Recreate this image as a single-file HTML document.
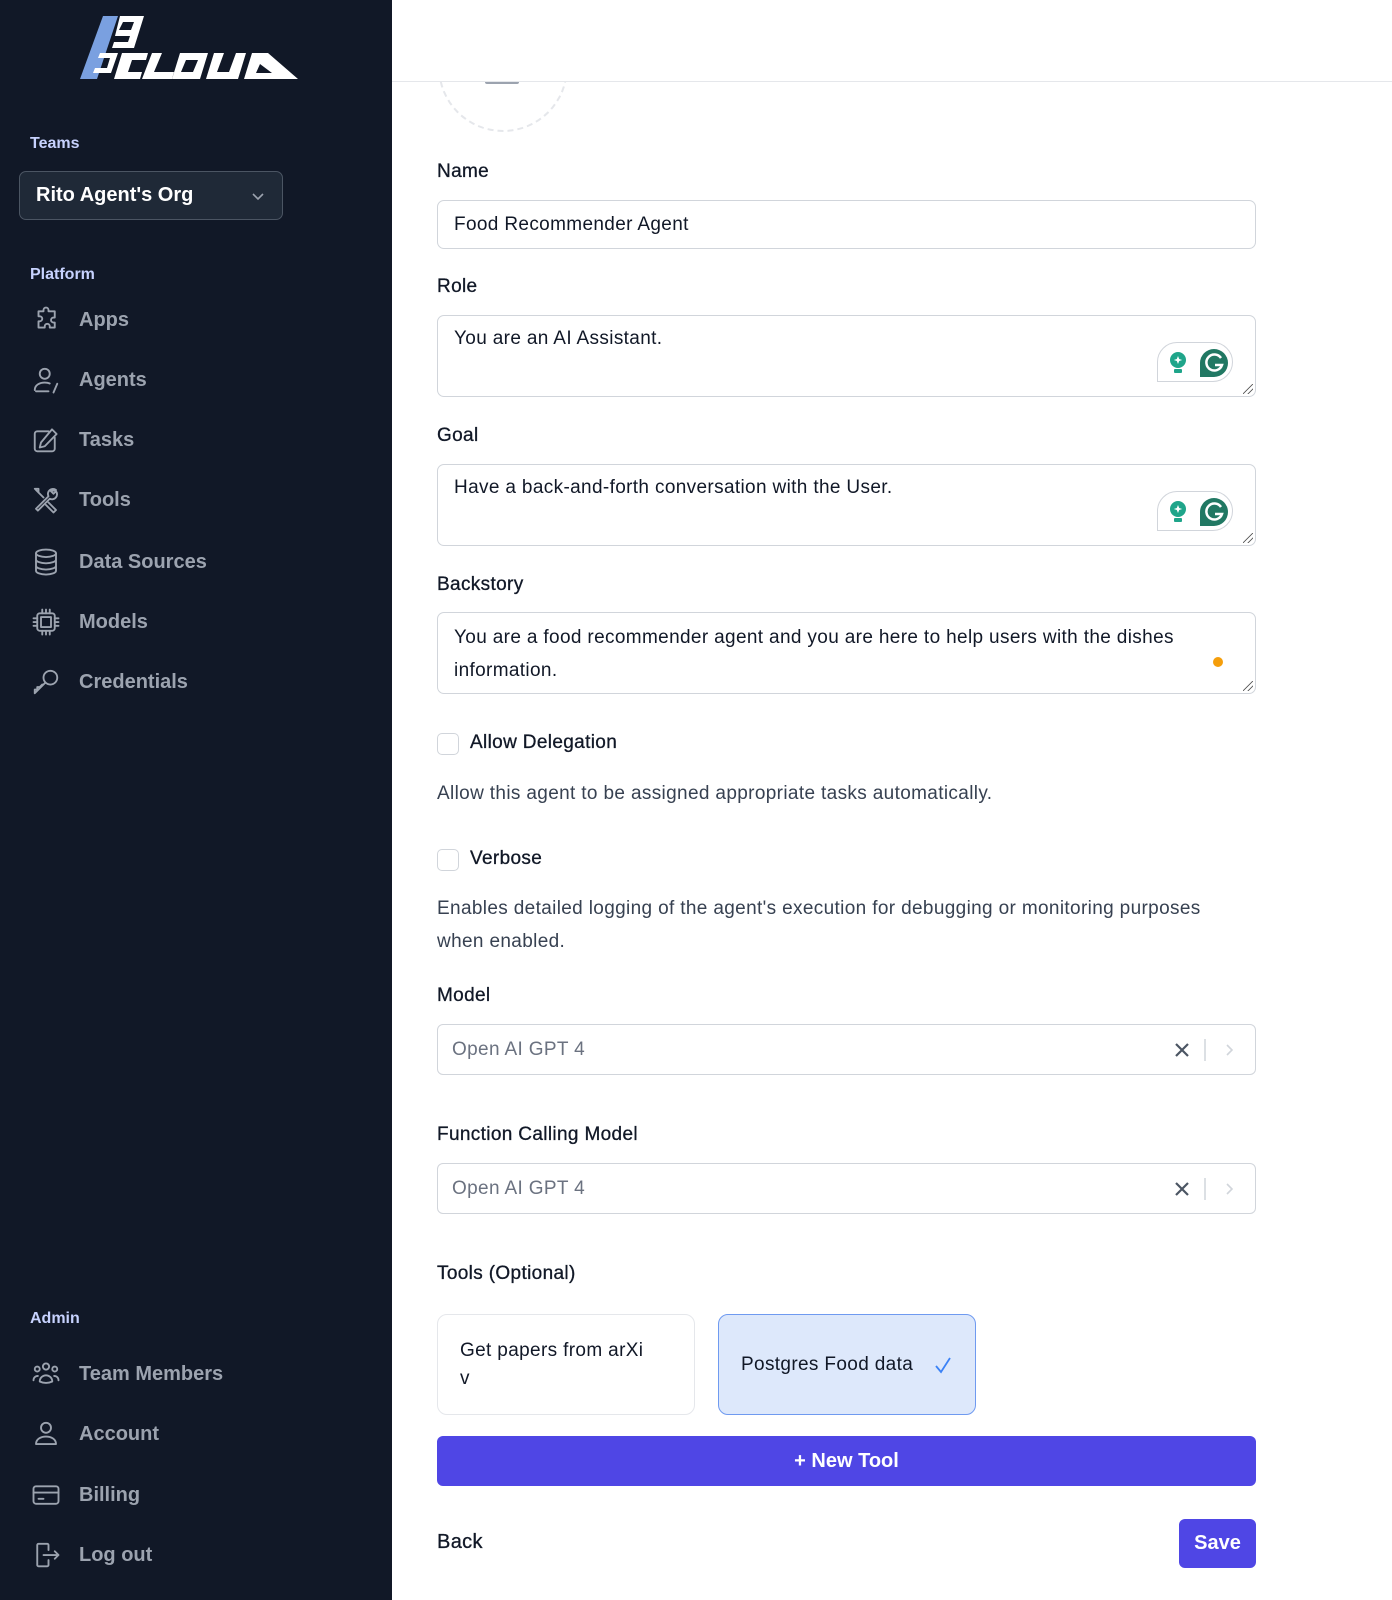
<!DOCTYPE html>
<html><head><meta charset="utf-8"><style>
*{box-sizing:border-box;margin:0;padding:0}
body{width:1392px;height:1600px;position:relative;overflow:hidden;font-family:"Liberation Sans",sans-serif;background:#fff;color:#111827}
.sb{position:absolute;left:0;top:0;width:392px;height:1600px;background:#111827}
.a{position:absolute}
.sec{color:#c7d2fe;font-weight:bold;font-size:16px;left:30px}
.nav{left:31px;display:flex;align-items:center;color:#9ca3af;font-weight:bold;font-size:20px;height:34px}
.nav svg{width:30px;height:30px;margin-right:18px;fill:none;stroke:#9ca3af;stroke-width:1.5;stroke-linecap:round;stroke-linejoin:round}
.m{letter-spacing:0.35px}
.lbl{left:437px;font-size:19px;color:#111827;letter-spacing:0.35px;-webkit-text-stroke:0.3px #111827}
.inp{left:437px;width:819px;border:1px solid #d1d5db;border-radius:7px;font-size:19px;padding:0 16px;color:#111827;letter-spacing:0.35px}
.gr{position:absolute;right:22px;bottom:14px;width:76px;height:40px;border:1px solid #d1d5db;border-radius:20px 20px 20px 0;background:#fff}
.rz{position:absolute;right:2px;bottom:2px;width:10px;height:10px;background:linear-gradient(135deg,transparent 45%,#555 46%,#555 52%,transparent 53%,transparent 70%,#555 71%,#555 77%,transparent 78%)}
.cb{left:437px;width:22px;height:22px;border:1px solid #d1d5db;border-radius:5px}
.desc{left:437px;font-size:19px;color:#374151;line-height:33px;letter-spacing:0.35px}
.sel{left:437px;width:819px;height:51px;border:1px solid #d1d5db;border-radius:6px;font-size:19px;color:#6b7280;padding-left:14px;line-height:49px;letter-spacing:0.35px}
</style></head><body>
<div class="sb">
<svg class="a" style="left:80px;top:16px" width="218" height="64" viewBox="0 0 218 64">
<polygon points="23,0 38,0 17,63 0,63" fill="#7aa0e0"/>
<path d="M40,0 L64,0 L54,32 L32,32 L34,26 L48,26 L50,20 L35,20 Z M43,6 L39,14 L51,14 L54,6 Z" fill="#fff" fill-rule="evenodd"/>
<path d="M20,37 L38,37 L31,57 L13,57 L15,52 L27,52 L30,42 L18,42 Z" fill="#fff"/>
<path d="M42,37 L68,37 L66,44 L52,44 L48,56 L62,56 L60,63 L34,63 Z" fill="#fff"/>
<path d="M72,37 L82,37 L74,56 L94,56 L92,63 L62,63 Z" fill="#fff"/>
<path d="M100,37 L128,37 L120,63 L92,63 Z M106,44 L101,56 L113,56 L118,44 Z" fill="#fff" fill-rule="evenodd"/>
<path d="M134,37 L144,37 L137,56 L149,56 L156,37 L166,37 L158,63 L126,63 Z" fill="#fff"/>
<path d="M172,37 L188,37 L218,63 L164,63 Z M180,48 L176,57 L192,57 Z" fill="#fff" fill-rule="evenodd"/>
</svg>
<div class="a sec" style="top:135px">Teams</div>
<div class="a" style="left:19px;top:171px;width:264px;height:49px;border:1px solid #4b5563;border-radius:7px;background:#1f2937;color:#fff;font-weight:bold;font-size:20px;padding-left:16px;line-height:47px">Rito Agent's Org
<svg class="a" style="right:16px;top:16px" width="16" height="16" viewBox="0 0 16 16"><path d="M3,6 L8,11 L13,6" fill="none" stroke="#9ca3af" stroke-width="1.6"/></svg></div>
<div class="a sec" style="top:266px">Platform</div>
<div class="a nav" style="top:303px"><svg viewBox="0 0 24 24"><path d="M14 4a2 2 0 1 0-4 0v1H6v4h1a2 2 0 1 1 0 4H6v5h5v-1a2 2 0 1 1 4 0v1h4v-4h-1a2 2 0 1 1 0-4h1V5h-5z"/></svg>Apps</div>
<div class="a nav" style="top:363px"><svg viewBox="0 0 24 24"><circle cx="11" cy="7" r="4"/><path d="M3 20c0-4 4-6 8-6 2 0 3 .3 4 .8M4 21h10M21 15l-3 7"/></svg>Agents</div>
<div class="a nav" style="top:423px"><svg viewBox="0 0 24 24"><path d="M16.8 3.5l3.7 3.7L11 17l-4 1 1-4z M19 10v9a2 2 0 0 1-2 2H5a2 2 0 0 1-2-2V7a2 2 0 0 1 2-2h9"/></svg>Tasks</div>
<div class="a nav" style="top:483px"><svg viewBox="0 0 24 24"><path d="M4 4l6 6M3 3l3 0 0 3M14 14l6 6-2 2-6-6M20 4a4 4 0 0 0-6 5L4 19l1.5 1.5L15 11a4 4 0 0 0 5-6l-2 2-2-2z"/></svg>Tools</div>
<div class="a nav" style="top:545px"><svg viewBox="0 0 24 24"><ellipse cx="12" cy="5" rx="8" ry="3"/><path d="M4 5v14c0 1.7 3.6 3 8 3s8-1.3 8-3V5M4 10c0 1.7 3.6 3 8 3s8-1.3 8-3M4 15c0 1.7 3.6 3 8 3s8-1.3 8-3"/></svg>Data Sources</div>
<div class="a nav" style="top:605px"><svg viewBox="0 0 24 24"><rect x="5" y="5" width="14" height="14" rx="2"/><rect x="8" y="8" width="8" height="8"/><path d="M9 2v3M12 2v3M15 2v3M9 19v3M12 19v3M15 19v3M2 9h3M2 12h3M2 15h3M19 9h3M19 12h3M19 15h3"/></svg>Models</div>
<div class="a nav" style="top:665px"><svg viewBox="0 0 24 24"><circle cx="15.5" cy="8.5" r="5.5"/><path d="M11.5 12.5L3 21v-3h2v-2h2l2-2"/></svg>Credentials</div>
<div class="a sec" style="top:1310px">Admin</div>
<div class="a nav" style="top:1357px"><svg viewBox="0 0 24 24"><circle cx="12" cy="6" r="2.5"/><circle cx="5" cy="8" r="2"/><circle cx="19" cy="8" r="2"/><path d="M7 18c0-3 2.5-5 5-5s5 2 5 5c-3 1.5-7 1.5-10 0zM2 17c0-2 1.5-3.5 3.5-3.5M22 17c0-2-1.5-3.5-3.5-3.5"/></svg>Team Members</div>
<div class="a nav" style="top:1417px"><svg viewBox="0 0 24 24"><circle cx="12" cy="7" r="4"/><path d="M4 20c0-4 4-6 8-6s8 2 8 6z"/></svg>Account</div>
<div class="a nav" style="top:1478px"><svg viewBox="0 0 24 24"><rect x="2" y="5" width="20" height="14" rx="2"/><path d="M2 10h20M6 15h4"/></svg>Billing</div>
<div class="a nav" style="top:1538px"><svg viewBox="0 0 24 24"><path d="M14 8V4a1 1 0 0 0-1-1H6a1 1 0 0 0-1 1v16a1 1 0 0 0 1 1h7a1 1 0 0 0 1-1v-4M10 12h12M19 9l3 3-3 3"/></svg>Log out</div>
</div>

<div class="a" style="left:438px;top:2px;width:130px;height:130px;border:2px dashed #e5e7eb;border-radius:50%"></div>
<div class="a" style="left:485px;top:80px;width:34px;height:4px;background:#9ca3af;border-radius:2px"></div>
<div class="a" style="left:392px;top:0;width:1000px;height:82px;background:#fff;border-bottom:1px solid #e5e7eb"></div>

<div class="a lbl" style="top:161px">Name</div>
<div class="a inp" style="top:200px;height:49px;line-height:47px">Food Recommender Agent</div>
<div class="a lbl" style="top:276px">Role</div>
<div class="a inp" style="top:315px;height:82px;padding-top:12px">You are an AI Assistant.<div class="gr"><svg class="a" style="left:6px;top:6px" width="64" height="28" viewBox="0 0 64 28"><circle cx="14" cy="11" r="8" fill="#1fa58a"/><rect x="10" y="20" width="8" height="4" rx="1" fill="#1fa58a"/><path d="M14 7l1.2 3 3 1-3 1-1.2 3-1.2-3-3-1 3-1z" fill="#fff"/><path d="M50 0a14 14 0 1 1 0 28H36V14A14 14 0 0 1 50 0z" fill="#217863"/><path d="M57 9a8 8 0 1 0 1 7h-7" fill="none" stroke="#fff" stroke-width="2.5"/></svg></div><div class="rz"></div></div>
<div class="a lbl" style="top:425px">Goal</div>
<div class="a inp" style="top:464px;height:82px;padding-top:12px">Have a back-and-forth conversation with the User.<div class="gr"><svg class="a" style="left:6px;top:6px" width="64" height="28" viewBox="0 0 64 28"><circle cx="14" cy="11" r="8" fill="#1fa58a"/><rect x="10" y="20" width="8" height="4" rx="1" fill="#1fa58a"/><path d="M14 7l1.2 3 3 1-3 1-1.2 3-1.2-3-3-1 3-1z" fill="#fff"/><path d="M50 0a14 14 0 1 1 0 28H36V14A14 14 0 0 1 50 0z" fill="#217863"/><path d="M57 9a8 8 0 1 0 1 7h-7" fill="none" stroke="#fff" stroke-width="2.5"/></svg></div><div class="rz"></div></div>
<div class="a lbl" style="top:574px">Backstory</div>
<div class="a inp" style="top:612px;height:82px;padding-top:8px;line-height:33px">You are a food recommender agent and you are here to help users with the dishes information.<div class="a" style="right:32px;top:44px;width:10px;height:10px;border-radius:50%;background:#f59e0b"></div><div class="rz"></div></div>

<div class="a cb" style="top:733px"></div>
<div class="a lbl" style="left:470px;top:732px">Allow Delegation</div>
<div class="a desc" style="top:777px">Allow this agent to be assigned appropriate tasks automatically.</div>
<div class="a cb" style="top:849px"></div>
<div class="a lbl" style="left:470px;top:848px">Verbose</div>
<div class="a desc" style="top:892px;width:819px">Enables detailed logging of the agent's execution for debugging or monitoring purposes<br>when enabled.</div>

<div class="a lbl" style="top:985px">Model</div>
<div class="a sel" style="top:1024px">Open AI GPT 4</div>
<div class="a lbl" style="top:1124px">Function Calling Model</div>
<div class="a sel" style="top:1163px">Open AI GPT 4</div>
<svg class="a" style="left:1170px;top:1037px" width="80" height="26" viewBox="0 0 80 26"><path d="M6 7l12 12M18 7L6 19" stroke="#4b5563" stroke-width="2.2"/><path d="M35 2v22" stroke="#d1d5db" stroke-width="1.5"/><path d="M57 8l5 5-5 5" fill="none" stroke="#d1d5db" stroke-width="1.6"/></svg>
<svg class="a" style="left:1170px;top:1176px" width="80" height="26" viewBox="0 0 80 26"><path d="M6 7l12 12M18 7L6 19" stroke="#4b5563" stroke-width="2.2"/><path d="M35 2v22" stroke="#d1d5db" stroke-width="1.5"/><path d="M57 8l5 5-5 5" fill="none" stroke="#d1d5db" stroke-width="1.6"/></svg>

<div class="a lbl" style="top:1263px">Tools (Optional)</div>
<div class="a m" style="left:437px;top:1314px;width:258px;height:101px;border:1px solid #e5e7eb;border-radius:10px;padding:22px 22px;font-size:19px;line-height:28px">Get papers from arXi<br>v</div>
<div class="a m" style="left:718px;top:1314px;width:258px;height:101px;border:1px solid #6f9af0;border-radius:10px;background:#dde8fb;padding:0 22px;font-size:19px;line-height:99px">Postgres Food data<svg class="a" style="right:22px;top:40px" width="20" height="20" viewBox="0 0 20 20"><path d="M3 11l5 6L17 3" fill="none" stroke="#3b82f6" stroke-width="1.8"/></svg></div>
<div class="a" style="left:437px;top:1436px;width:819px;height:50px;background:#4f46e5;border-radius:6px;color:#fff;font-weight:bold;font-size:20px;text-align:center;line-height:50px">+ New Tool</div>
<div class="a lbl" style="top:1531px;font-size:20px">Back</div>
<div class="a" style="left:1179px;top:1519px;width:77px;height:49px;background:#4f46e5;border-radius:6px;color:#fff;font-weight:bold;font-size:20px;text-align:center;line-height:49px">Save</div>
</body></html>
